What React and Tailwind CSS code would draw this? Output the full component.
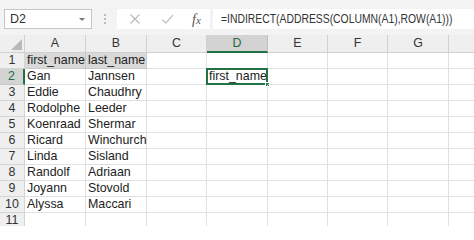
const colNames = ["A", "B", "C", "D", "E", "F", "G", ""];
const colWidths = ["w-[61px]", "w-[61px]", "w-[60px]", "w-[61px]", "w-[60px]", "w-[60px]", "w-[61px]", "w-[61px]"];

const rows = [
  ["first_name", "last_name"],
  ["Gan", "Jannsen"],
  ["Eddie", "Chaudhry"],
  ["Rodolphe", "Leeder"],
  ["Koenraad", "Shermar"],
  ["Ricard", "Winchurch"],
  ["Linda", "Sisland"],
  ["Randolf", "Adriaan"],
  ["Joyann", "Stovold"],
  ["Alyssa", "Maccari"],
  [],
];

function Toolbar() {
  return (
    <div className="flex h-[35px] items-start bg-[#f3f3f3] pt-[9px]">
      <div className="relative ml-[4px] flex h-[20px] w-[88px] shrink-0 items-center border border-[#c6c6c6] bg-white pl-[5px] text-[12.5px] text-[#333]">
        D2
        <span className="absolute right-[6px] top-[8px] h-0 w-0 border-x-[3px] border-t-[3px] border-x-transparent border-t-[#777]" />
      </div>
      <div className="ml-[12px] flex h-[20px] shrink-0 flex-col justify-center gap-[2px]">
        <span className="h-[2px] w-[2px] rounded-full bg-[#aaa]" />
        <span className="h-[2px] w-[2px] rounded-full bg-[#aaa]" />
        <span className="h-[2px] w-[2px] rounded-full bg-[#aaa]" />
      </div>
      <div className="ml-[11px] flex h-[20px] w-[93px] shrink-0 items-center bg-white">
        <svg width="12" height="12" viewBox="0 0 12 12" className="ml-[12px]">
          <path d="M1.5 1.5 L10.5 10.5 M10.5 1.5 L1.5 10.5" stroke="#b8b8b8" strokeWidth="1.1" fill="none" />
        </svg>
        <svg width="13" height="12" viewBox="0 0 13 12" className="ml-[20px]">
          <path d="M1 6.5 L4.8 10 L12 2" stroke="#c4c4c4" strokeWidth="1.3" fill="none" />
        </svg>
        <span className="ml-[18px] font-['Liberation_Serif',serif] text-[14px] italic text-[#555]">
          f<span className="text-[11px]">x</span>
        </span>
      </div>
      <div className="ml-[3px] flex h-[20px] min-w-0 flex-1 items-center overflow-hidden bg-white pl-[8px] text-[#333]">
        <span className="origin-left scale-x-[0.83] whitespace-nowrap text-[12.5px]">
          =INDIRECT(ADDRESS(COLUMN(A1),ROW(A1)))
        </span>
      </div>
    </div>
  );
}

function HeaderRow() {
  return (
    <div className="flex h-[18px] bg-[#efefef]">
      <div className="relative w-[25px] shrink-0 border-r border-b border-[#d0d0d0]">
        <svg width="11" height="11" viewBox="0 0 11 11" className="absolute bottom-[2px] right-[2px]">
          <path d="M11 0 L11 11 L0 11 Z" fill="#b9b9b9" />
        </svg>
      </div>
      {colNames.map((c, i) => (
        <div
          key={i}
          className={
            c === "D"
              ? `${colWidths[i]} flex shrink-0 items-center justify-center border-r border-b-2 border-r-[#c0c0c0] border-b-[#217346] bg-[#d3d3d3] text-[#1e6b41]`
              : `${colWidths[i]} flex shrink-0 items-center justify-center border-r border-b border-[#d0d0d0] text-[#333]`
          }
        >
          {c}
        </div>
      ))}
    </div>
  );
}

function Row({ n, cells }) {
  const sel = n === 2;
  return (
    <div className="flex h-[16px]">
      <div
        className={
          sel
            ? "flex w-[25px] shrink-0 items-center justify-center border-r-2 border-b border-r-[#217346] border-b-[#c8c8c8] bg-[#d3d3d3] text-[#1e6b41]"
            : "flex w-[25px] shrink-0 items-center justify-center border-r border-b border-[#d4d4d4] bg-[#efefef] text-[#333]"
        }
      >
        {n}
      </div>
      {colNames.map((c, i) => {
        const val = cells[i] || (sel && c === "D" ? "first_name" : "");
        const shade = n === 1 && i < 2;
        return (
          <div
            key={i}
            className={
              shade
                ? `${colWidths[i]} relative shrink-0 overflow-visible whitespace-nowrap border-r border-b border-[#c9c9c9] bg-[#d9d9d9] pl-[2px] leading-[15px] text-[#222]`
                : `${colWidths[i]} relative shrink-0 overflow-visible whitespace-nowrap border-r border-b border-[#e1e1e1] pl-[2px] leading-[15px] text-[#222]`
            }
          >
            {val}
            {sel && c === "D" && (
              <>
                <span className="absolute -left-[1px] -top-[1px] h-[17px] w-[62px] border-2 border-[#217346]" />
                <span className="absolute -bottom-[3px] -right-[3px] h-[5px] w-[5px] border border-white bg-[#217346]" />
              </>
            )}
          </div>
        );
      })}
    </div>
  );
}

export default function App() {
  return (
    <div className="h-[226px] w-[474px] overflow-hidden bg-white font-['Liberation_Sans',Arial,sans-serif] text-[12.4px]">
      <Toolbar />
      <HeaderRow />
      {rows.map((cells, i) => (
        <Row key={i} n={i + 1} cells={cells} />
      ))}
    </div>
  );
}
